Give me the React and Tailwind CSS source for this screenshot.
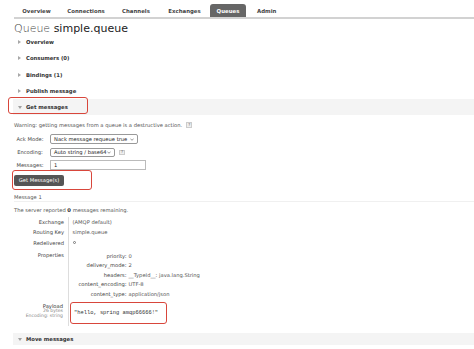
import React from 'react'

const tabs = [
    { name: 'Overview', w: 'w-[45px]' },
    { name: 'Connections', w: 'w-[54px]' },
    { name: 'Channels', w: 'w-[46px]' },
    { name: 'Exchanges', w: 'w-[51px]' },
    { name: 'Queues', w: 'w-[36px]', active: true },
    { name: 'Admin', w: 'w-[40px]' },
]

const sections = ['Overview', 'Consumers (0)', 'Bindings (1)', 'Publish message']

const props = [
    ['priority:', '0'],
    ['delivery_mode:', '2'],
    ['headers:', '__TypeId__: java.lang.String'],
    ['content_encoding:', 'UTF-8'],
    ['content_type:', 'application/json'],
]

function Caret({ open }) {
    if (open) {
        return (
            <svg width="4" height="3" viewBox="0 0 4 3">
                <polygon points="0,0 4,0 2,3" fill="#a0a0a0" />
            </svg>
        )
    }
    return (
        <svg width="3" height="4" viewBox="0 0 3 4">
            <polygon points="0,0 3,2 0,4" fill="#a8a8a8" />
        </svg>
    )
}

function SectionRow({ title, open, shaded, height, children }) {
    return (
        <div className={`relative flex items-center ml-[13px] pl-[4px] ${height} ${shaded ? 'bg-[#f4f4f4]' : ''}`}>
            <div className="w-[5px] flex justify-center">
                <Caret open={open} />
            </div>
            <span className="ml-[4px] font-bold text-[5.3px] text-[#333]">{title}</span>
            {children}
        </div>
    )
}

function Help() {
    return (
        <span className="inline-flex items-center justify-center w-[6px] h-[5.5px] ml-[4px] bg-[#eee] border border-[#ccc] text-[4px] leading-none text-[#666] align-middle">?</span>
    )
}

function Chevron() {
    return (
        <svg width="4" height="3" viewBox="0 0 4 3" className="ml-auto mr-[3px]">
            <polyline points="0.4,0.6 2,2.3 3.6,0.6" fill="none" stroke="#555" strokeWidth="0.6" />
        </svg>
    )
}

function FormRow({ label, children }) {
    return (
        <div className="flex items-center h-[10px]">
            <div className="w-[32px] text-center text-[#444]">{label}</div>
            <div className="ml-[4px] flex items-center h-full">{children}</div>
        </div>
    )
}

function InfoRow({ label, height, children }) {
    return (
        <div className="flex">
            <div className={`w-[54px] pr-[4px] text-right text-[#444] flex items-center justify-end ${height}`}>{label}</div>
            <div className={`border-l border-[#ddd] pl-[3.5px] text-[#555] flex items-center ${height}`}>{children}</div>
        </div>
    )
}

export default function App() {
    return (
        <div className="w-[474px] h-[349px] overflow-hidden bg-white font-['DejaVu_Sans',Verdana,sans-serif] text-[5.2px] leading-[10px] text-[#444]">
            {/* nav */}
            <div className="ml-[14px] h-[19px] pt-[4px] flex border-b-2 border-[#d2d2d2]">
                {tabs.map((t) => (
                    <div
                        key={t.name}
                        className={`${t.w} h-[13px] flex items-center font-bold text-[5.4px] ${t.active ? 'justify-center bg-[#666] text-white rounded-t-[3px]' : t.name === 'Admin' ? 'pl-[11px] text-[#444]' : 'justify-center text-[#444]'}`}
                    >
                        {t.name}
                    </div>
                ))}
            </div>

            {/* title */}
            <div className="mt-[4px] ml-[14px] h-[11px] leading-[11px] text-[11px] text-[#222]">
                <span className="font-light text-[#444]">Queue</span> simple.queue
            </div>

            {/* collapsed sections */}
            {sections.map((s) => (
                <SectionRow key={s} title={s} height="h-[16.3px]" />
            ))}

            <SectionRow title="Get messages" open shaded height="h-[16.3px]">
                <div className="absolute left-[-5px] top-[-2px] w-[80px] h-[17px] border-[1.5px] border-[#d8463b] rounded-[3px]" />
            </SectionRow>

            {/* get messages body */}
            <div className="pl-[14px]">
                <div className="mt-[4.5px] h-[10px] flex items-center text-[#555]">
                    Warning: getting messages from a queue is a destructive action.
                    <Help />
                </div>

                <div className="mt-[4.5px] flex flex-col gap-[3px]">
                    <FormRow label="Ack Mode:">
                        <div className="w-[88px] h-[10px] flex items-center pl-[3px] border border-[#999] rounded-[2px] bg-white text-[#222]">
                            Nack message requeue true
                            <Chevron />
                        </div>
                    </FormRow>
                    <FormRow label="Encoding:">
                        <div className="w-[65px] h-[9.5px] flex items-center pl-[3px] border border-[#999] rounded-[2px] bg-white text-[#222]">
                            Auto string / base64
                            <Chevron />
                        </div>
                        <Help />
                    </FormRow>
                    <FormRow label="Messages:">
                        <div className="w-[96px] h-[10px] flex items-center pl-[3px] border border-[#bbb] bg-white text-[#222]">
                            1
                        </div>
                    </FormRow>
                </div>

                <div className="relative mt-[4.5px] w-[50px] h-[10.7px] flex items-center justify-center bg-[#555] rounded-[2px] text-white">
                    Get Message(s)
                    <div className="absolute left-[-2.5px] top-[-5px] w-[80px] h-[20px] border-[1.5px] border-[#d8463b] rounded-[3px]" />
                </div>

                <div className="mt-[6.3px] h-[10px] border-b border-[#f0f0f0] text-[#555]">Message 1</div>

                <div className="mt-[3px] h-[10px] text-[#555]">
                    The server reported <span className="font-bold text-[#222]">0</span> messages remaining.
                </div>

                {/* message table */}
                <div className="mt-[2px]">
                    <InfoRow label="Exchange" height="h-[10.3px]">(AMQP default)</InfoRow>
                    <InfoRow label="Routing Key" height="h-[10.3px]">simple.queue</InfoRow>
                    <InfoRow label="Redelivered" height="h-[10.3px]">
                        <span className="inline-block w-[3.5px] h-[3.5px] rounded-full border-[0.6px] border-[#777]" />
                    </InfoRow>

                    <div className="flex">
                        <div className="w-[54px] pr-[4px] pt-[3px] text-right leading-[9.6px] text-[#444]">Properties</div>
                        <div className="border-l border-[#ddd] pl-[3.5px] pt-[3px]">
                            {props.map(([k, v]) => (
                                <div key={k} className="flex h-[9.6px] items-center">
                                    <div className="w-[54px] text-right text-[#444]">{k}</div>
                                    <div className="ml-[2px] text-[#555]">{v}</div>
                                </div>
                            ))}
                        </div>
                    </div>

                    <div className="flex">
                        <div className="w-[54px] pr-[5px] pt-[5.5px] text-right">
                            <div className="leading-[5px] text-[#333]">Payload</div>
                            <div className="leading-[4.5px] text-[4.6px] text-[#888]">26 bytes</div>
                            <div className="leading-[4.5px] text-[4.6px] text-[#888]">Encoding: string</div>
                        </div>
                        <div className="border-l border-[#ddd] pt-[3px] pb-[2px]">
                            <div className="ml-[1px] w-[97px] h-[22px] flex items-center pl-[3px] border-[1.5px] border-[#d8463b] rounded-[3px] font-['Liberation_Mono','DejaVu_Sans_Mono',monospace] text-[5.4px] text-[#333]">
                                "hello, spring amqp66666!"
                            </div>
                        </div>
                    </div>
                </div>
            </div>

            <div className="mt-[7.5px]">
                <SectionRow title="Move messages" open shaded height="h-[12px]" />
            </div>
        </div>
    )
}
